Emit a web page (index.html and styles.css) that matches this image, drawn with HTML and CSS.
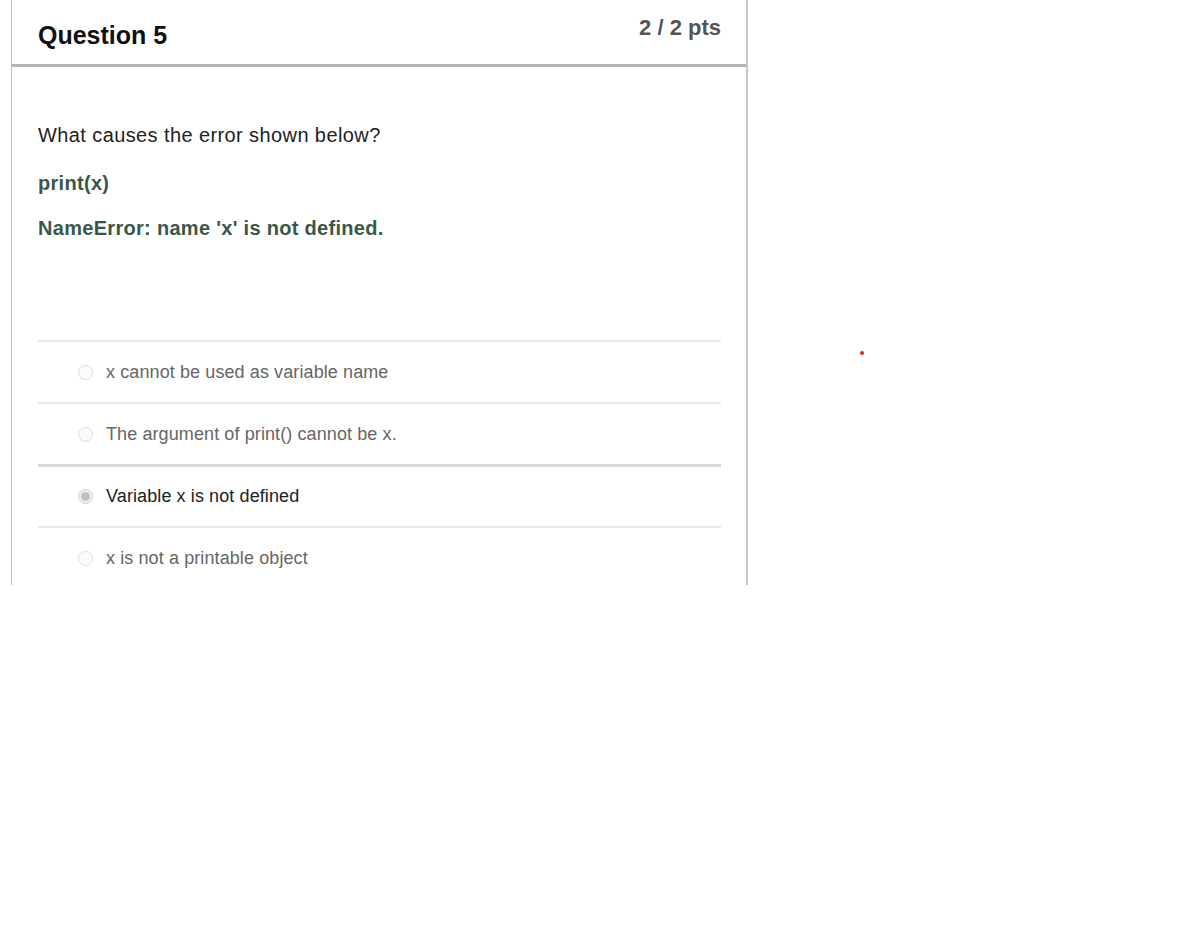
FILE: index.html
```html
<!DOCTYPE html>
<html lang="en">
<head>
    <meta charset="UTF-8">
    <title>Question 5</title>
    <link rel="stylesheet" href="styles.css">
</head>
<body>
    <div class="question">
        <div class="header">
            <h2 class="title">Question 5</h2>
            <span class="points">2 / 2 pts</span>
        </div>
        <div class="content">
            <p class="text">What causes the error shown below?</p>
            <p class="code">print(x)</p>
            <p class="code error">NameError: name 'x' is not defined.</p>
            <ul class="answers">
                <li class="answer"><span class="radio"></span>x cannot be used as variable name</li>
                <li class="answer"><span class="radio"></span>The argument of print() cannot be x.</li>
                <li class="answer selected"><span class="radio"></span>Variable x is not defined</li>
                <li class="answer"><span class="radio"></span>x is not a printable object</li>
            </ul>
        </div>
    </div>
    <span class="dot"></span>
</body>
</html>
```

FILE: styles.css
```css
body {
    margin: 0;
    font-family: "Liberation Sans", Arial, sans-serif;
    background: #fff;
    color: #222;
}
.question {
    width: 734px;
    height: 585px;
    margin-left: 11px;
    border-left: 1px solid #bdbdbd;
    border-right: 2px solid #c8c8c8;
    overflow: hidden;
}
.header {
    height: 64px;
    border-bottom: 3px solid #b5b5b5;
    display: flex;
    justify-content: space-between;
    padding: 0 25px 0 26px;
}
.title {
    margin: 0;
    padding-top: 20px;
    font-size: 25px;
    line-height: 31px;
    color: #111;
}
.points {
    padding-top: 14px;
    font-size: 22px;
    line-height: 28px;
    font-weight: bold;
    color: #555;
}
.content {
    padding: 56px 25px 0 26px;
}
.text {
    margin: 0;
    font-size: 20px;
    line-height: 24px;
    letter-spacing: 0.4px;
    color: #222;
}
.code {
    margin: 24px 0 0;
    font-size: 20px;
    line-height: 24px;
    font-weight: bold;
    letter-spacing: 0.3px;
    color: #3a5849;
}
.error {
    margin-top: 21px;
}
.answers {
    list-style: none;
    margin: 100px 0 0;
    padding: 0;
}
.answer {
    display: flex;
    align-items: center;
    height: 60px;
    border-top: 2px solid #e8e8e8;
    padding-left: 40px;
    font-size: 18px;
    letter-spacing: 0.1px;
    color: #666;
}
.answer.selected {
    height: 59px;
    border-top: 3px solid #d8d8d8;
    color: #222;
}
.radio {
    width: 13px;
    height: 13px;
    border: 1px solid #dedede;
    border-radius: 50%;
    background: #fbfbfb;
    margin-right: 13px;
    flex-shrink: 0;
    display: flex;
    align-items: center;
    justify-content: center;
}
.selected .radio {
    border-color: #d0d0d0;
    background: #f2f2f2;
}
.selected .radio::after {
    content: "";
    width: 9px;
    height: 9px;
    border-radius: 50%;
    background: #c2c2c2;
}
.dot {
    position: absolute;
    left: 860px;
    top: 351px;
    width: 4px;
    height: 4px;
    border-radius: 50%;
    background: #e82020;
}
```
